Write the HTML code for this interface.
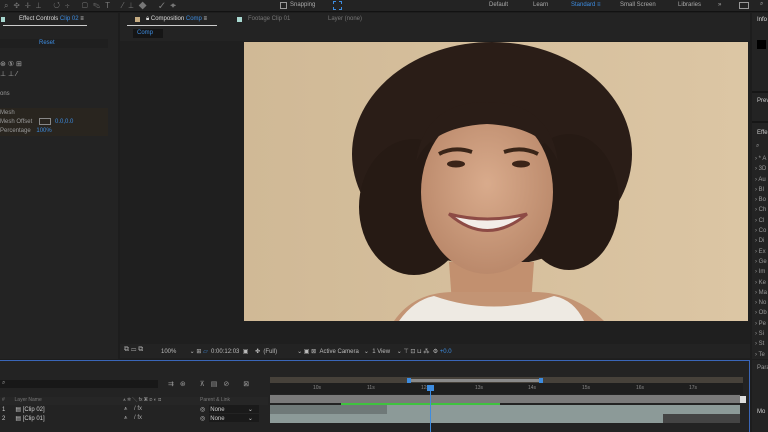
<!DOCTYPE html>
<html><head><style>
*{margin:0;padding:0;box-sizing:border-box}
body{width:768px;height:432px;overflow:hidden;background:#1d1d1d;font-family:"Liberation Sans",sans-serif;font-size:6px;color:#9a9a9a;position:relative}
.a{position:absolute;white-space:nowrap}
.b{color:#3d8ce0}
</style></head><body>
<div class="a" style="left:0;top:0;width:768px;height:12px;background:#232323;border-bottom:1px solid #121212"></div>
<div class="a" style="left:4px;top:1px;font-size:8px;color:#777;letter-spacing:5px">⌕✥✛⊥ ↺⊹ ▢✎T ⁄⊥◆ ✓✦</div>
<div class="a" style="left:280px;top:2px;width:7px;height:7px;border:1px solid #999"></div>
<div class="a" style="left:290px;top:2px;color:#aaa">Snapping</div>
<div class="a" style="left:333px;top:1px;width:9px;height:9px;border:1px dashed #3d8ce0"></div>
<div class="a" style="left:489px;top:2px;color:#aaa">Default</div>
<div class="a" style="left:533px;top:2px;color:#aaa">Learn</div>
<div class="a" style="left:571px;top:2px"><span class="b">Standard</span> <span class="b">≡</span></div>
<div class="a" style="left:620px;top:2px;color:#aaa">Small Screen</div>
<div class="a" style="left:678px;top:2px;color:#aaa">Libraries</div>
<div class="a" style="left:718px;top:2px;color:#aaa">»</div>
<div class="a" style="left:739px;top:2px;width:10px;height:7px;border:1px solid #999"></div>
<div class="a" style="left:760px;top:1px;color:#aaa">⌕</div>
<div class="a" style="left:0;top:13px;width:118px;height:346px;background:#232323"></div>
<div class="a" style="left:1px;top:17px;width:4px;height:5px;background:#a8d8d0"></div>
<div class="a" style="left:19px;top:16px;color:#ddd">Effect Controls <span class="b">Clip 02</span> ≡</div>
<div class="a" style="left:3px;top:25px;width:84px;height:1px;background:#ccc"></div>
<div class="a" style="left:0;top:39px;width:108px;height:9px;background:#1f1f1f"></div>
<div class="a" style="left:39px;top:40px"><span class="b">Reset</span></div>
<div class="a" style="left:0;top:60px;color:#aaa;font-size:7px;line-height:10px">⊛ ⑤ ⊞<br>⊥ ⊥ ⁄</div>
<div class="a" style="left:0;top:91px">ons</div>
<div class="a" style="left:0;top:108px;width:108px;height:28px;background:#29251f"></div>
<div class="a" style="left:0;top:110px">Mesh</div>
<div class="a" style="left:0;top:119px">Mesh Offset</div>
<div class="a" style="left:39px;top:118px;width:12px;height:7px;border:1px solid #888"></div>
<div class="a" style="left:55px;top:119px"><span class="b">0.0,0.0</span></div>
<div class="a" style="left:0;top:128px">Percentage <span class="b" style="margin-left:4px">100%</span></div>
<div class="a" style="left:120px;top:13px;width:630px;height:346px;background:#1f1f1f"></div>
<div class="a" style="left:120px;top:13px;width:630px;height:28px;background:#232323"></div>
<div class="a" style="left:135px;top:17px;width:5px;height:5px;background:#c6ac82"></div>
<div class="a" style="left:146px;top:16px;color:#ddd">🔒︎ Composition <span class="b">Comp</span> ≡</div>
<div class="a" style="left:127px;top:25px;width:90px;height:1px;background:#ccc"></div>
<div class="a" style="left:237px;top:17px;width:5px;height:5px;background:#a8d8d0"></div>
<div class="a" style="left:248px;top:16px;color:#777">Footage Clip 01</div>
<div class="a" style="left:328px;top:16px;color:#777">Layer (none)</div>
<div class="a" style="left:133px;top:29px;width:30px;height:9px;background:#151515"></div>
<div class="a" style="left:137px;top:30px"><span class="b">Comp</span></div>
<svg class="a" style="left:244px;top:42px" width="504" height="279" viewBox="0 0 504 279">
<defs><linearGradient id="bg" x1="0" x2="1"><stop offset="0" stop-color="#d0b996"/><stop offset="1" stop-color="#dcc6a4"/></linearGradient>
<radialGradient id="sk" cx=".5" cy=".45" r=".6"><stop offset="0" stop-color="#d9ab8c"/><stop offset="1" stop-color="#b88668"/></radialGradient></defs>
<rect width="504" height="279" fill="url(#bg)"/>
<ellipse cx="248" cy="112" rx="140" ry="112" fill="#2a1d17"/>
<ellipse cx="170" cy="165" rx="55" ry="68" fill="#261a14"/>
<ellipse cx="325" cy="160" rx="50" ry="68" fill="#261a14"/>
<path d="M205 220 L210 290 L285 290 L290 220Z" fill="#c2906f"/>
<path d="M150 279 Q170 250 210 250 L290 250 Q330 250 360 279Z" fill="#c39474"/>
<path d="M155 279 Q170 258 190 254 Q250 275 310 254 Q330 258 340 279Z" fill="#eeeae3"/>
<ellipse cx="243" cy="150" rx="66" ry="82" fill="url(#sk)"/>
<path d="M172 120 Q180 60 243 60 Q306 60 314 120 Q300 85 243 82 Q186 85 172 120Z" fill="#2a1d17"/>
<path d="M195 112 Q210 104 228 110" stroke="#3a2518" stroke-width="4" fill="none"/>
<path d="M260 110 Q278 104 294 112" stroke="#3a2518" stroke-width="4" fill="none"/>
<ellipse cx="212" cy="122" rx="9" ry="3.5" fill="#3b2418"/>
<ellipse cx="277" cy="122" rx="9" ry="3.5" fill="#3b2418"/>
<path d="M205 172 Q243 205 283 172 Q243 182 205 172Z" fill="#f3ede8" stroke="#8d4b45" stroke-width="3"/>
</svg>
<div class="a" style="left:120px;top:344px;width:630px;height:14px;background:#232323"></div>
<div class="a" style="left:124px;top:346px;color:#aaa;font-size:7px">⧉ ▭ ⧉</div>
<div class="a" style="left:161px;top:348px;color:#bbb">100%&nbsp;&nbsp;&nbsp;&nbsp;&nbsp;&nbsp;&nbsp;&nbsp;⌄ ⊞ <span class="b">▱</span>&nbsp; 0:00:12:03 &nbsp;▣ &nbsp;&nbsp;&nbsp;✤ &nbsp;(Full) &nbsp;&nbsp;&nbsp;&nbsp;&nbsp;&nbsp;&nbsp;&nbsp;&nbsp;&nbsp;&nbsp;⌄ ▣ ⊠ &nbsp;Active Camera &nbsp;&nbsp;⌄ &nbsp;1 View &nbsp;&nbsp;&nbsp;⌄ ⊤ ⊡ ⊔ ⁂ &nbsp;⚙ <span class="b">+0.0</span></div>
<div class="a" style="left:752px;top:13px;width:16px;height:346px;background:#232323"></div>
<div class="a" style="left:757px;top:17px;color:#ddd">Info</div>
<div class="a" style="left:757px;top:40px;width:9px;height:9px;background:#000"></div>
<div class="a" style="left:752px;top:91px;width:16px;height:2px;background:#161616"></div>
<div class="a" style="left:757px;top:98px;color:#ccc">Prev</div>
<div class="a" style="left:752px;top:121px;width:16px;height:2px;background:#161616"></div>
<div class="a" style="left:757px;top:130px;color:#ccc">Effe</div>
<div class="a" style="left:756px;top:143px">⌕</div>
<div class="a" style="left:755px;top:154px;line-height:10.3px;color:#999">› * A<br>› 3D<br>› Au<br>› Bl<br>› Bo<br>› Ch<br>› Cl<br>› Co<br>› Di<br>› Ex<br>› Ge<br>› Im<br>› Ke<br>› Ma<br>› No<br>› Ob<br>› Pe<br>› Si<br>› St<br>› Te<br>› Tr</div>
<div class="a" style="left:0;top:360px;width:750px;height:72px;background:#232323;border-top:1px solid #3a66b8"></div>
<div class="a" style="left:749px;top:360px;width:1px;height:72px;background:#3a66b8"></div>
<div class="a" style="left:752px;top:360px;width:16px;height:72px;background:#232323"></div>
<div class="a" style="left:757px;top:365px">Para</div>
<div class="a" style="left:757px;top:409px;color:#ccc">Mo</div>
<div class="a" style="left:0;top:380px;width:158px;height:8px;background:#181818"></div>
<div class="a" style="left:2px;top:380px">⌕</div>
<div class="a" style="left:168px;top:380px;color:#999;font-size:7px;letter-spacing:6px">⇉⊛ ⊼▤⊘ ⊠</div>
<div class="a" style="left:0;top:397px;width:268px;height:8px;background:#262626"></div>
<div class="a" style="left:2px;top:397px;color:#777;font-size:5px">#&nbsp;&nbsp;&nbsp;&nbsp;&nbsp;&nbsp;&nbsp;Layer Name</div>
<div class="a" style="left:123px;top:397px;color:#999;font-size:5px">⩚ ✲ ╲ fx ▣ ⊘ ◐ ⊡</div>
<div class="a" style="left:200px;top:397px;color:#777;font-size:5px">Parent &amp; Link</div>
<div class="a" style="left:2px;top:406px;color:#ccc">1&nbsp;&nbsp;&nbsp;&nbsp;&nbsp;&nbsp;▤ [Clip 02]</div>
<div class="a" style="left:2px;top:415px;color:#ccc">2&nbsp;&nbsp;&nbsp;&nbsp;&nbsp;&nbsp;▤ [Clip 01]</div>
<div class="a" style="left:124px;top:406px;color:#aaa">⩚&nbsp;&nbsp;&nbsp;&nbsp;/ fx</div>
<div class="a" style="left:124px;top:415px;color:#aaa">⩚&nbsp;&nbsp;&nbsp;&nbsp;/ fx</div>
<div class="a" style="left:209px;top:405px;width:50px;height:8px;background:#1a1a1a"></div>
<div class="a" style="left:209px;top:414px;width:50px;height:8px;background:#1a1a1a"></div>
<div class="a" style="left:200px;top:406px;color:#ccc">◎&nbsp;&nbsp;&nbsp;None&nbsp;&nbsp;&nbsp;&nbsp;&nbsp;&nbsp;&nbsp;&nbsp;&nbsp;&nbsp;&nbsp;&nbsp;&nbsp;&nbsp;⌄</div>
<div class="a" style="left:200px;top:415px;color:#ccc">◎&nbsp;&nbsp;&nbsp;None&nbsp;&nbsp;&nbsp;&nbsp;&nbsp;&nbsp;&nbsp;&nbsp;&nbsp;&nbsp;&nbsp;&nbsp;&nbsp;&nbsp;⌄</div>
<div class="a" style="left:270px;top:377px;width:473px;height:6px;background:#46413a"></div>
<div class="a" style="left:409px;top:379px;width:132px;height:3px;background:#8a8a8a"></div>
<div class="a" style="left:407px;top:378px;width:4px;height:5px;background:#3d8ce0"></div>
<div class="a" style="left:539px;top:378px;width:4px;height:5px;background:#3d8ce0"></div>
<div class="a" style="left:270px;top:383px;width:473px;height:11px;background:#1e1e1e;color:#888;font-size:5px">
<span class="a" style="left:43px;top:2px">10s</span><span class="a" style="left:97px;top:2px">11s</span><span class="a" style="left:151px;top:2px">12s</span><span class="a" style="left:205px;top:2px">13s</span><span class="a" style="left:258px;top:2px">14s</span><span class="a" style="left:312px;top:2px">15s</span><span class="a" style="left:366px;top:2px">16s</span><span class="a" style="left:419px;top:2px">17s</span></div>
<div class="a" style="left:270px;top:395px;width:470px;height:8px;background:#7a7a7a"></div>
<div class="a" style="left:341px;top:403px;width:159px;height:2px;background:#3fc23f"></div>
<div class="a" style="left:270px;top:405px;width:470px;height:9px;background:#6f7978"></div>
<div class="a" style="left:387px;top:405px;width:353px;height:9px;background:#8c9a98"></div>
<div class="a" style="left:270px;top:414px;width:470px;height:9px;background:#444"></div>
<div class="a" style="left:270px;top:414px;width:393px;height:9px;background:#8c9a98"></div>
<div class="a" style="left:430px;top:386px;width:1px;height:46px;background:#3d8ce0"></div>
<div class="a" style="left:427px;top:385px;width:7px;height:6px;background:#3d8ce0"></div>
<div class="a" style="left:740px;top:396px;width:6px;height:7px;background:#ddd"></div>
</body></html>
